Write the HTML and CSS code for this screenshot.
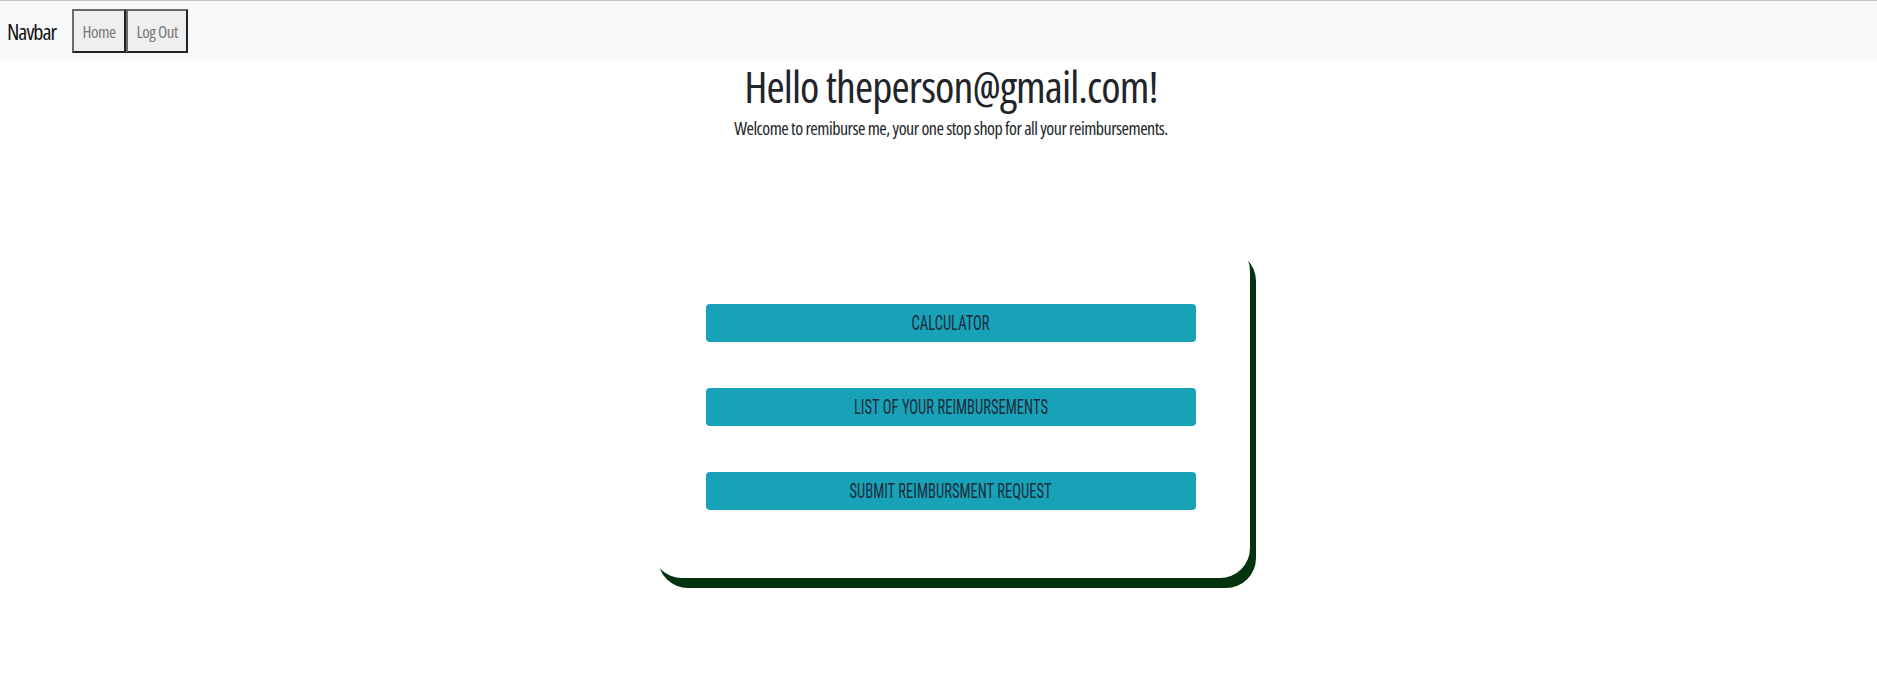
FILE: index.html
```html
<!DOCTYPE html>
<html lang="en">
<head>
<meta charset="utf-8">
<title>Reimburse Me</title>
<link rel="stylesheet" href="styles.css">
</head>
<body>
<nav class="navbar">
  <span class="brand">Navbar</span>
  <button class="nav-btn">Home</button><button class="nav-btn">Log Out</button>
</nav>
<main class="main">
  <h1 class="title">Hello theperson@gmail.com!</h1>
  <p class="subtitle">Welcome to remiburse me, your one stop shop for all your reimbursements.</p>
  <section class="card">
    <button class="action"><span class="action-label">Calculator</span></button>
    <button class="action"><span class="action-label">List of your reimbursements</span></button>
    <button class="action"><span class="action-label">Submit reimbursment request</span></button>
  </section>
</main>
</body>
</html>
```
FILE: styles.css
```css
* { box-sizing: border-box; }
html, body { margin: 0; padding: 0; }
body {
  min-height: 100vh;
  background: #fff;
  color: #212529;
  font-family: "Open Sans", sans-serif;
  font-stretch: 75%;
  border-top: 1px solid #c4c4c4;
}
.navbar {
  display: flex;
  align-items: center;
  height: 60px;
  background: #f8f9fa;
  padding: 0 0 0 7px;
}
.brand {
  font-size: 22px;
  letter-spacing: -1px;
  color: #111;
  margin-right: 16px;
}
.nav-btn {
  font-family: inherit;
  font-stretch: inherit;
  font-size: 17px;
  letter-spacing: -0.5px;
  color: #777;
  background: #efefef;
  height: 44px;
  padding: 0 8.5px;
  border: 2px solid;
  border-color: #6a6a6a #222 #222 #6a6a6a;
  margin: 0;
}
.main {
  padding: 0 0 40px 25px;
  text-align: center;
}
.title {
  font-size: 44px;
  letter-spacing: -0.9px;
  font-weight: 400;
  line-height: 48px;
  margin: 0;
  padding-top: 1px;
}
.subtitle {
  font-size: 18px;
  letter-spacing: -0.5px;
  margin: 6px 0 0;
  line-height: 24px;
}
.card {
  width: 598px;
  margin: 101px auto 0;
  background: #fff;
  border-radius: 30px;
  box-shadow: 6px 10px 0 #04330f;
  padding: 63px 54px 68px;
  display: flex;
  flex-direction: column;
  gap: 46px;
}
.action {
  display: flex;
  align-items: center;
  justify-content: center;
  font-family: Roboto, sans-serif;
  font-stretch: 75%;
  height: 38px;
  width: 100%;
  padding: 0;
  background: #17a2b8;
  border: none;
  border-radius: 4px;
  color: #1f2a3a;
  font-size: 20px;
  text-transform: uppercase;
}
.action-label {
  display: inline-block;
  white-space: nowrap;
  transform: scaleX(0.73);
}
```
